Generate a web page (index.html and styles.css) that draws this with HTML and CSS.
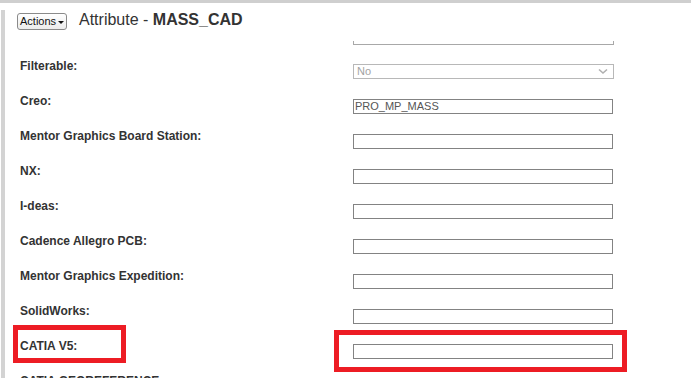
FILE: index.html
```html
<!DOCTYPE html>
<html>
<head>
<meta charset="utf-8">
<link rel="stylesheet" href="styles.css">
</head>
<body>
<div class="topline"></div>
<div class="page">
  <div class="rail"></div>
  <div class="main">
    <div class="header">
      <button class="actions">Actions<span class="caret"></span></button>
      <div class="title">Attribute - <b>MASS_CAD</b></div>
    </div>
    <div class="form">
      <div class="clip-row"><div class="clip-box"></div></div>
      <div class="row"><div class="label">Filterable:</div>
        <div class="select"><span>No</span>
          <svg class="chev" width="10" height="7" viewBox="0 0 10 7"><path d="M1 1.5 L5 5 L9 1.5" fill="none" stroke="#b0b0b0" stroke-width="1.6"/></svg>
        </div>
      </div>
      <div class="row"><div class="label">Creo:</div><div class="input">PRO_MP_MASS</div></div>
      <div class="row"><div class="label">Mentor Graphics Board Station:</div><div class="input"></div></div>
      <div class="row"><div class="label">NX:</div><div class="input"></div></div>
      <div class="row"><div class="label">I-deas:</div><div class="input"></div></div>
      <div class="row"><div class="label">Cadence Allegro PCB:</div><div class="input"></div></div>
      <div class="row"><div class="label">Mentor Graphics Expedition:</div><div class="input"></div></div>
      <div class="row"><div class="label">SolidWorks:</div><div class="input"></div></div>
      <div class="row"><div class="label">CATIA V5:</div><div class="input"></div></div>
      <div class="row"><div class="label">CATIA GEOREFERENCE:</div><div class="input"></div></div>
    </div>
  </div>
</div>
<div class="mark mark-label"></div>
<div class="mark mark-input"></div>
</body>
</html>
```
FILE: styles.css
```css
html, body {
  margin: 0;
  padding: 0;
  background: #fff;
  overflow: hidden;
  width: 691px;
  height: 378px;
  font-family: "Liberation Sans", Arial, sans-serif;
  color: #333;
}
.topline {
  height: 3px;
  background: #cfcfcf;
}
.page {
  display: flex;
  height: 375px;
}
.rail {
  width: 4px;
  margin-left: 1px;
  margin-top: 7px;
  background: #d3d3d3;
  flex: none;
}
.main {
  flex: 1;
  padding-left: 12px;
  display: flex;
  flex-direction: column;
  overflow: hidden;
}
.header {
  height: 38px;
  display: flex;
  align-items: flex-start;
  flex: none;
}
.actions {
  margin-top: 10px;
  height: 17px;
  width: 50px;
  padding: 0 0 0 2px;
  border: 1px solid #8a8a8a;
  border-radius: 3px;
  background: linear-gradient(#ffffff, #ececec);
  font-family: "Liberation Sans", Arial, sans-serif;
  font-size: 11px;
  color: #111;
  display: flex;
  align-items: center;
  line-height: 15px;
}
.caret {
  display: inline-block;
  width: 0;
  height: 0;
  border-left: 3px solid transparent;
  border-right: 3px solid transparent;
  border-top: 3px solid #111;
  margin-left: 2px;
  margin-top: 2px;
}
.title {
  margin-top: 8px;
  margin-left: 12px;
  font-size: 16px;
  line-height: 18px;
  color: #333;
}
.title b {
  font-weight: bold;
}
.form {
  padding-left: 3px;
}
.clip-row {
  height: 21px;
  padding-left: 333px;
}
.clip-box {
  width: 261px;
  height: 4px;
  box-sizing: border-box;
  border: 1px solid #a8a8a8;
  border-top: none;
}
.row {
  height: 35px;
  display: flex;
  align-items: flex-start;
}
.label {
  width: 333px;
  flex: none;
  margin-top: -2px;
  font-size: 12px;
  line-height: 12px;
  font-weight: bold;
  color: #333;
}
.input, .select {
  margin-top: 2px;
  width: 260px;
  height: 15px;
  box-sizing: border-box;
  border: 1px solid #838383;
  font-size: 11px;
  line-height: 13px;
  color: #555;
  padding-left: 1px;
}
.select {
  border-color: #b8b8b8;
  color: #a3a3a3;
  display: flex;
  align-items: center;
  justify-content: space-between;
  padding-left: 3px;
  padding-right: 5px;
  width: 261px;
}
.chev {
  display: block;
}
.mark {
  position: absolute;
  border: 5px solid #ed1c24;
  box-sizing: border-box;
}
.mark-label {
  left: 13px;
  top: 325px;
  width: 113px;
  height: 38px;
}
.mark-input {
  left: 334px;
  top: 330px;
  width: 293px;
  height: 42px;
}
```
